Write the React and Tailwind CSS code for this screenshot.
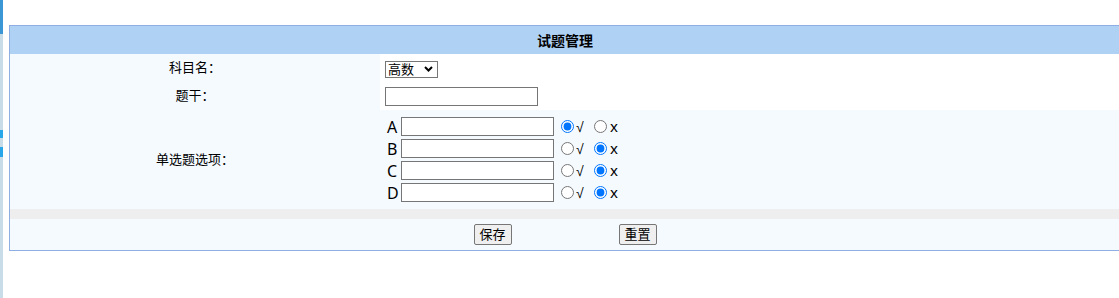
import { useState } from "react";

const options = [
  { key: "A", right: true },
  { key: "B", right: false },
  { key: "C", right: false },
  { key: "D", right: false },
];

function OptionRow({ item }) {
  const [right, setRight] = useState(item.right);
  return (
    <div className="flex items-center h-[19px]">
      <span className="w-[14px] text-[16px] leading-none">{item.key}</span>
      <input
        type="text"
        className="w-[153px] h-[19px] border border-[#767676] bg-white outline-none"
      />
      <input
        type="radio"
        name={"opt" + item.key}
        checked={right}
        onChange={() => setRight(true)}
        className="ml-[7px] w-[13px] h-[13px] m-0 accent-[#0075ff]"
      />
      <span
        className="ml-[2px] w-[9px] text-[14px] leading-none"
        style={{ fontFamily: '"Liberation Sans", sans-serif' }}
      >
        √
      </span>
      <input
        type="radio"
        name={"opt" + item.key}
        checked={!right}
        onChange={() => setRight(false)}
        className="ml-[9px] w-[13px] h-[13px] m-0 accent-[#0075ff]"
      />
      <span className="ml-[3px] text-[15px] leading-none">x</span>
    </div>
  );
}

export default function App() {
  return (
    <div
      className="w-[1119px] h-[298px] flex overflow-hidden bg-white text-black"
      style={{ fontFamily: '"Noto Sans", "Noto Sans CJK SC", sans-serif' }}
    >
      {/* left frame edge */}
      <div className="w-[3px] shrink-0 flex flex-col">
        <div className="h-[34px] bg-[#3b97d3]"></div>
        <div className="flex-1 bg-[#c9dde8] flex flex-col">
          <div className="h-[96px]"></div>
          <div className="h-[8px] bg-[#2aa7e8]"></div>
          <div className="h-[9px]"></div>
          <div className="h-[10px] bg-[#2aa7e8]"></div>
        </div>
      </div>

      <div className="pl-[6px] pt-[25px] shrink-0">
        <div className="w-[1112px] border border-[#8eaee4] text-[13px]">
          <div className="h-[28px] bg-[#afd1f4] flex items-center justify-center font-bold text-[14px]">
            试题管理
          </div>

          <div className="grid grid-cols-[370px_1fr]">
            <div className="h-[28px] bg-[#f5faff] flex items-center justify-center">科目名：</div>
            <div className="h-[28px] bg-white flex items-center pl-[5px]">
              <div className="relative w-[53px] h-[17px]">
                <select className="appearance-none w-full h-full border border-[#767676] bg-white pl-[2px] text-[13px] leading-none outline-none rounded-none">
                  <option>高数</option>
                  <option>英语</option>
                  <option>政治</option>
                </select>
                <svg
                  className="absolute right-[5px] top-[6px] pointer-events-none"
                  width="9"
                  height="6"
                  viewBox="0 0 9 6"
                >
                  <polyline points="1,1 4.5,4.5 8,1" fill="none" stroke="#000" strokeWidth="2" />
                </svg>
              </div>
            </div>

            <div className="h-[28px] bg-[#f5faff] flex items-center justify-center">题干：</div>
            <div className="h-[28px] bg-white flex items-center pl-[5px]">
              <input
                type="text"
                className="w-[153px] h-[19px] border border-[#767676] bg-white outline-none"
              />
            </div>

            <div className="h-[99px] bg-[#f5faff] flex items-center justify-center">单选题选项：</div>
            <div className="h-[99px] bg-[#f5faff] pl-[7px] pt-[7px] flex flex-col gap-[3px]">
              {options.map((item) => (
                <OptionRow key={item.key} item={item} />
              ))}
            </div>
          </div>

          <div className="h-[10px] bg-[#eeeeee]"></div>

          <div className="h-[31px] bg-[#f5faff] flex items-center justify-center gap-[107px]">
            <button className="w-[38px] h-[21px] bg-[#efefef] border border-[#767676] rounded-[2px] text-[13px] leading-none">
              保存
            </button>
            <button className="w-[38px] h-[21px] bg-[#efefef] border border-[#767676] rounded-[2px] text-[13px] leading-none">
              重置
            </button>
          </div>
        </div>
      </div>
    </div>
  );
}
